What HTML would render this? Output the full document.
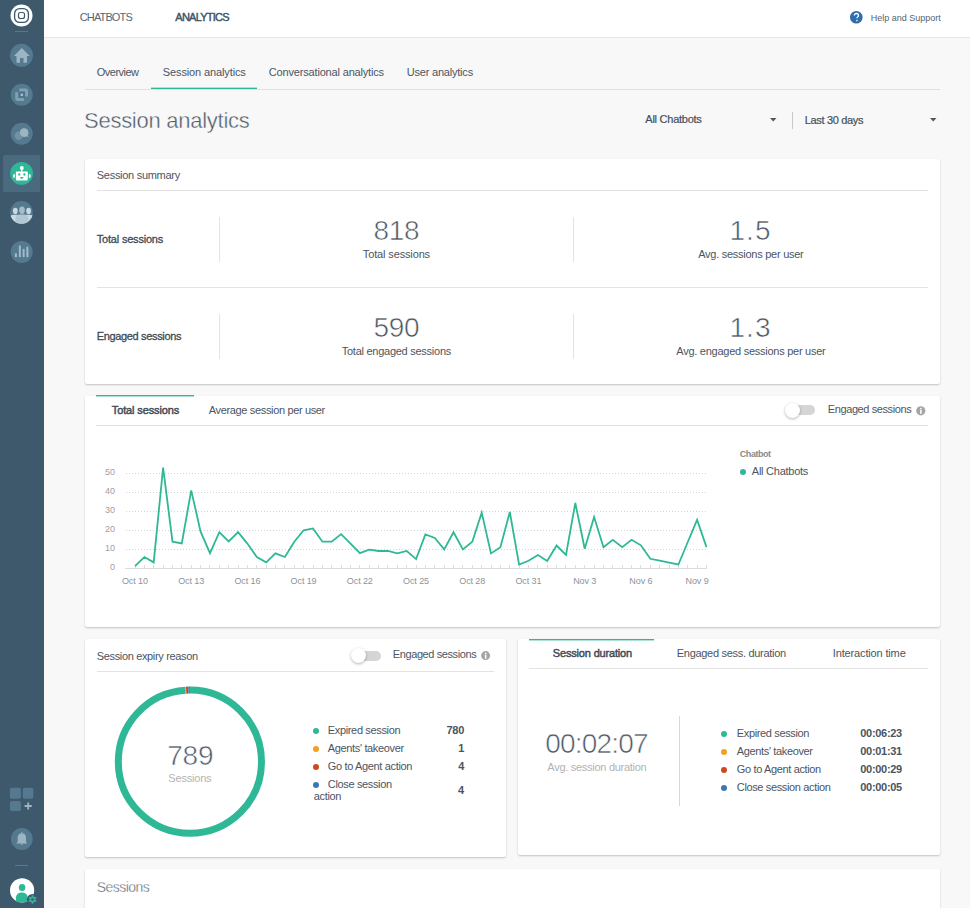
<!DOCTYPE html>
<html><head><meta charset="utf-8"><style>
html,body{margin:0;padding:0;}
body{width:970px;height:908px;overflow:hidden;position:relative;background:#f8f8f8;font-family:"Liberation Sans", sans-serif;}
.t{position:absolute;white-space:nowrap;}
</style></head><body>
<div style="position:absolute;left:44px;top:0px;width:926px;height:37px;background:#fff;"></div>
<div style="position:absolute;left:44px;top:37px;width:926px;height:1px;background:#e6e6e6;"></div>
<div class="t" style="top:12px;font-size:11px;line-height:11px;letter-spacing:-0.88px;color:#526676;left:79.8px;">CHATBOTS</div>
<div class="t" style="top:12px;font-size:11px;line-height:11px;letter-spacing:-0.75px;color:#3e5567;left:175.3px;-webkit-text-stroke:0.45px #3e5567;">ANALYTICS</div>
<svg style="position:absolute;left:849px;top:10px" width="15" height="15" viewBox="0 0 15 15"><circle cx="7.3" cy="7.3" r="6.3" fill="#2f6ead"/><path d="M5.3 5.6c0-1.3 1-2.1 2.1-2.1s2.1.8 2.1 1.9c0 1.4-1.6 1.5-1.6 2.9" stroke="#fff" stroke-width="1.3" fill="none"/><circle cx="7.9" cy="10.6" r="0.8" fill="#fff"/></svg>
<div class="t" style="top:14px;font-size:9px;line-height:9px;color:#556370;left:870.8px;">Help and Support</div>
<div style="position:absolute;left:85px;top:89px;width:855px;height:1px;background:#e0e0e0;"></div>
<div style="position:absolute;left:151px;top:87px;width:106px;height:2px;background:linear-gradient(rgba(46,184,150,0.35) 50%, #2eb896 50%);"></div>
<div class="t" style="top:67px;font-size:11px;line-height:11px;letter-spacing:-0.53px;color:#4b5561;left:96.8px;">Overview</div>
<div class="t" style="top:67px;font-size:11px;line-height:11px;letter-spacing:-0.12px;color:#4b5561;left:162.8px;">Session analytics</div>
<div class="t" style="top:67px;font-size:11px;line-height:11px;letter-spacing:-0.17px;color:#4b5561;left:268.8px;">Conversational analytics</div>
<div class="t" style="top:67px;font-size:11px;line-height:11px;letter-spacing:-0.21px;color:#4b5561;left:406.8px;">User analytics</div>
<div class="t" style="top:110px;font-size:22px;line-height:22px;letter-spacing:-0.26px;color:#4e5b68;left:84.0px;-webkit-text-stroke:0.4px #f8f8f8;">Session analytics</div>
<div class="t" style="top:114px;font-size:11px;line-height:11px;letter-spacing:-0.25px;color:#444f5a;left:645.3px;-webkit-text-stroke:0.2px #444f5a;">All Chatbots</div>
<div class="t" style="top:115px;font-size:11px;line-height:11px;letter-spacing:-0.34px;color:#444f5a;left:804.8px;-webkit-text-stroke:0.2px #444f5a;">Last 30 days</div>
<svg style="position:absolute;left:770px;top:118px" width="7" height="4"><path d="M0 0h6.5L3.25 3.5z" fill="#555"/></svg>
<svg style="position:absolute;left:930px;top:118px" width="7" height="4"><path d="M0 0h6.5L3.25 3.5z" fill="#555"/></svg>
<div style="position:absolute;left:792px;top:112px;width:1px;height:17px;background:#c8c8c8;"></div>
<div style="position:absolute;left:85px;top:159px;width:855px;height:225px;background:#fff;border-radius:2px;box-shadow:0 1px 2px rgba(0,0,0,0.22);"></div>
<div style="position:absolute;left:85px;top:396px;width:855px;height:231px;background:#fff;border-radius:2px;box-shadow:0 1px 2px rgba(0,0,0,0.22);"></div>
<div style="position:absolute;left:85px;top:639px;width:421px;height:218px;background:#fff;border-radius:2px;box-shadow:0 1px 2px rgba(0,0,0,0.22);"></div>
<div style="position:absolute;left:518px;top:639px;width:422px;height:216px;background:#fff;border-radius:2px;box-shadow:0 1px 2px rgba(0,0,0,0.22);"></div>
<div style="position:absolute;left:85px;top:869px;width:855px;height:60px;background:#fff;border-radius:2px;box-shadow:0 1px 2px rgba(0,0,0,0.22);"></div>
<div class="t" style="top:170px;font-size:11px;line-height:11px;letter-spacing:-0.29px;color:#4b5561;left:96.8px;">Session summary</div>
<div style="position:absolute;left:97px;top:190px;width:831px;height:1px;background:#e3e3e3;"></div>
<div style="position:absolute;left:97px;top:287px;width:831px;height:1px;background:#e3e3e3;"></div>
<div style="position:absolute;left:219px;top:217px;width:1px;height:45px;background:#e3e3e3;"></div>
<div style="position:absolute;left:573px;top:217px;width:1px;height:45px;background:#e3e3e3;"></div>
<div style="position:absolute;left:219px;top:314px;width:1px;height:45px;background:#e3e3e3;"></div>
<div style="position:absolute;left:573px;top:314px;width:1px;height:45px;background:#e3e3e3;"></div>
<div class="t" style="top:234px;font-size:11px;line-height:11px;letter-spacing:-0.2px;color:#3f4a55;left:96.8px;-webkit-text-stroke:0.3px #3f4a55;">Total sessions</div>
<div class="t" style="top:331px;font-size:11px;line-height:11px;letter-spacing:-0.35px;color:#3f4a55;left:96.8px;-webkit-text-stroke:0.3px #3f4a55;">Engaged sessions</div>
<div class="t" style="top:217px;font-size:28px;line-height:28px;letter-spacing:-0.4px;color:#4b5561;left:246.3px;width:300px;text-align:center;-webkit-text-stroke:0.6px #fff;">818</div>
<div class="t" style="top:249px;font-size:11px;line-height:11px;letter-spacing:-0.14px;color:#4b5561;left:246.43px;width:300px;text-align:center;">Total sessions</div>
<div class="t" style="top:217px;font-size:28px;line-height:28px;letter-spacing:1.0px;color:#4b5561;left:600.5px;width:300px;text-align:center;-webkit-text-stroke:0.6px #fff;">1.5</div>
<div class="t" style="top:249px;font-size:11px;line-height:11px;letter-spacing:-0.26px;color:#4b5561;left:600.87px;width:300px;text-align:center;">Avg. sessions per user</div>
<div class="t" style="top:314px;font-size:28px;line-height:28px;letter-spacing:-0.4px;color:#4b5561;left:246.3px;width:300px;text-align:center;-webkit-text-stroke:0.6px #fff;">590</div>
<div class="t" style="top:346px;font-size:11px;line-height:11px;letter-spacing:-0.26px;color:#4b5561;left:246.37px;width:300px;text-align:center;">Total engaged sessions</div>
<div class="t" style="top:314px;font-size:28px;line-height:28px;letter-spacing:1.0px;color:#4b5561;left:600.5px;width:300px;text-align:center;-webkit-text-stroke:0.6px #fff;">1.3</div>
<div class="t" style="top:346px;font-size:11px;line-height:11px;letter-spacing:-0.26px;color:#4b5561;left:600.87px;width:300px;text-align:center;">Avg. engaged sessions per user</div>
<div style="position:absolute;left:96px;top:395px;width:98px;height:2px;background:linear-gradient(#2eb896 50%, rgba(46,184,150,0.4) 50%);"></div>
<div style="position:absolute;left:96px;top:425px;width:832px;height:1px;background:#e3e3e3;"></div>
<div class="t" style="top:405px;font-size:11px;line-height:11px;letter-spacing:-0.13px;color:#3f4a55;left:111.8px;-webkit-text-stroke:0.45px #3f4a55;">Total sessions</div>
<div class="t" style="top:405px;font-size:11px;line-height:11px;letter-spacing:-0.35px;color:#4b5561;left:208.8px;">Average session per user</div>
<div style="position:absolute;left:787px;top:405px;width:28px;height:10px;background:#d5d5d5;border-radius:5px;"></div>
<div style="position:absolute;left:785px;top:403px;width:15px;height:15px;background:#fff;border-radius:50%;box-shadow:0 1px 3px rgba(0,0,0,0.3);"></div>
<div class="t" style="top:404px;font-size:11px;line-height:11px;letter-spacing:-0.4px;color:#4b5561;left:827.8px;">Engaged sessions</div>
<svg style="position:absolute;left:916px;top:406px" width="10" height="10"><circle cx="4.8" cy="4.8" r="4.6" fill="#a5a5a5"/><rect x="4.1" y="4" width="1.5" height="3.8" fill="#fff"/><circle cx="4.85" cy="2.6" r="0.85" fill="#fff"/></svg>
<svg style="position:absolute;left:0;top:0" width="970" height="908"><line x1="126" y1="549.5" x2="707" y2="549.5" stroke="#d4d4d4" stroke-width="1" stroke-dasharray="1 2"/><line x1="126" y1="530.5" x2="707" y2="530.5" stroke="#d4d4d4" stroke-width="1" stroke-dasharray="1 2"/><line x1="126" y1="511.5" x2="707" y2="511.5" stroke="#d4d4d4" stroke-width="1" stroke-dasharray="1 2"/><line x1="126" y1="492.5" x2="707" y2="492.5" stroke="#d4d4d4" stroke-width="1" stroke-dasharray="1 2"/><line x1="126" y1="473.5" x2="707" y2="473.5" stroke="#d4d4d4" stroke-width="1" stroke-dasharray="1 2"/><line x1="125" y1="568.5" x2="707" y2="568.5" stroke="#dcdcdc" stroke-width="1"/><line x1="135.5" y1="565" x2="135.5" y2="568" stroke="#dcdcdc" stroke-width="1"/><line x1="144.5" y1="565" x2="144.5" y2="568" stroke="#dcdcdc" stroke-width="1"/><line x1="153.5" y1="565" x2="153.5" y2="568" stroke="#dcdcdc" stroke-width="1"/><line x1="163.5" y1="565" x2="163.5" y2="568" stroke="#dcdcdc" stroke-width="1"/><line x1="172.5" y1="565" x2="172.5" y2="568" stroke="#dcdcdc" stroke-width="1"/><line x1="181.5" y1="565" x2="181.5" y2="568" stroke="#dcdcdc" stroke-width="1"/><line x1="191.5" y1="565" x2="191.5" y2="568" stroke="#dcdcdc" stroke-width="1"/><line x1="200.5" y1="565" x2="200.5" y2="568" stroke="#dcdcdc" stroke-width="1"/><line x1="209.5" y1="565" x2="209.5" y2="568" stroke="#dcdcdc" stroke-width="1"/><line x1="219.5" y1="565" x2="219.5" y2="568" stroke="#dcdcdc" stroke-width="1"/><line x1="228.5" y1="565" x2="228.5" y2="568" stroke="#dcdcdc" stroke-width="1"/><line x1="238.5" y1="565" x2="238.5" y2="568" stroke="#dcdcdc" stroke-width="1"/><line x1="247.5" y1="565" x2="247.5" y2="568" stroke="#dcdcdc" stroke-width="1"/><line x1="256.5" y1="565" x2="256.5" y2="568" stroke="#dcdcdc" stroke-width="1"/><line x1="266.5" y1="565" x2="266.5" y2="568" stroke="#dcdcdc" stroke-width="1"/><line x1="275.5" y1="565" x2="275.5" y2="568" stroke="#dcdcdc" stroke-width="1"/><line x1="284.5" y1="565" x2="284.5" y2="568" stroke="#dcdcdc" stroke-width="1"/><line x1="294.5" y1="565" x2="294.5" y2="568" stroke="#dcdcdc" stroke-width="1"/><line x1="303.5" y1="565" x2="303.5" y2="568" stroke="#dcdcdc" stroke-width="1"/><line x1="313.5" y1="565" x2="313.5" y2="568" stroke="#dcdcdc" stroke-width="1"/><line x1="322.5" y1="565" x2="322.5" y2="568" stroke="#dcdcdc" stroke-width="1"/><line x1="331.5" y1="565" x2="331.5" y2="568" stroke="#dcdcdc" stroke-width="1"/><line x1="341.5" y1="565" x2="341.5" y2="568" stroke="#dcdcdc" stroke-width="1"/><line x1="350.5" y1="565" x2="350.5" y2="568" stroke="#dcdcdc" stroke-width="1"/><line x1="359.5" y1="565" x2="359.5" y2="568" stroke="#dcdcdc" stroke-width="1"/><line x1="369.5" y1="565" x2="369.5" y2="568" stroke="#dcdcdc" stroke-width="1"/><line x1="378.5" y1="565" x2="378.5" y2="568" stroke="#dcdcdc" stroke-width="1"/><line x1="387.5" y1="565" x2="387.5" y2="568" stroke="#dcdcdc" stroke-width="1"/><line x1="397.5" y1="565" x2="397.5" y2="568" stroke="#dcdcdc" stroke-width="1"/><line x1="406.5" y1="565" x2="406.5" y2="568" stroke="#dcdcdc" stroke-width="1"/><line x1="416.5" y1="565" x2="416.5" y2="568" stroke="#dcdcdc" stroke-width="1"/><line x1="425.5" y1="565" x2="425.5" y2="568" stroke="#dcdcdc" stroke-width="1"/><line x1="434.5" y1="565" x2="434.5" y2="568" stroke="#dcdcdc" stroke-width="1"/><line x1="444.5" y1="565" x2="444.5" y2="568" stroke="#dcdcdc" stroke-width="1"/><line x1="453.5" y1="565" x2="453.5" y2="568" stroke="#dcdcdc" stroke-width="1"/><line x1="462.5" y1="565" x2="462.5" y2="568" stroke="#dcdcdc" stroke-width="1"/><line x1="472.5" y1="565" x2="472.5" y2="568" stroke="#dcdcdc" stroke-width="1"/><line x1="481.5" y1="565" x2="481.5" y2="568" stroke="#dcdcdc" stroke-width="1"/><line x1="491.5" y1="565" x2="491.5" y2="568" stroke="#dcdcdc" stroke-width="1"/><line x1="500.5" y1="565" x2="500.5" y2="568" stroke="#dcdcdc" stroke-width="1"/><line x1="509.5" y1="565" x2="509.5" y2="568" stroke="#dcdcdc" stroke-width="1"/><line x1="519.5" y1="565" x2="519.5" y2="568" stroke="#dcdcdc" stroke-width="1"/><line x1="528.5" y1="565" x2="528.5" y2="568" stroke="#dcdcdc" stroke-width="1"/><line x1="537.5" y1="565" x2="537.5" y2="568" stroke="#dcdcdc" stroke-width="1"/><line x1="547.5" y1="565" x2="547.5" y2="568" stroke="#dcdcdc" stroke-width="1"/><line x1="556.5" y1="565" x2="556.5" y2="568" stroke="#dcdcdc" stroke-width="1"/><line x1="565.5" y1="565" x2="565.5" y2="568" stroke="#dcdcdc" stroke-width="1"/><line x1="575.5" y1="565" x2="575.5" y2="568" stroke="#dcdcdc" stroke-width="1"/><line x1="584.5" y1="565" x2="584.5" y2="568" stroke="#dcdcdc" stroke-width="1"/><line x1="594.5" y1="565" x2="594.5" y2="568" stroke="#dcdcdc" stroke-width="1"/><line x1="603.5" y1="565" x2="603.5" y2="568" stroke="#dcdcdc" stroke-width="1"/><line x1="612.5" y1="565" x2="612.5" y2="568" stroke="#dcdcdc" stroke-width="1"/><line x1="622.5" y1="565" x2="622.5" y2="568" stroke="#dcdcdc" stroke-width="1"/><line x1="631.5" y1="565" x2="631.5" y2="568" stroke="#dcdcdc" stroke-width="1"/><line x1="640.5" y1="565" x2="640.5" y2="568" stroke="#dcdcdc" stroke-width="1"/><line x1="650.5" y1="565" x2="650.5" y2="568" stroke="#dcdcdc" stroke-width="1"/><line x1="659.5" y1="565" x2="659.5" y2="568" stroke="#dcdcdc" stroke-width="1"/><line x1="669.5" y1="565" x2="669.5" y2="568" stroke="#dcdcdc" stroke-width="1"/><line x1="678.5" y1="565" x2="678.5" y2="568" stroke="#dcdcdc" stroke-width="1"/><line x1="687.5" y1="565" x2="687.5" y2="568" stroke="#dcdcdc" stroke-width="1"/><line x1="697.5" y1="565" x2="697.5" y2="568" stroke="#dcdcdc" stroke-width="1"/><line x1="706.5" y1="565" x2="706.5" y2="568" stroke="#dcdcdc" stroke-width="1"/><polyline points="135.0,566.2 144.4,557.0 153.7,562.4 163.1,467.6 172.5,541.7 181.8,543.4 191.2,490.4 200.6,531.6 210.0,553.2 219.3,532.2 228.7,541.5 238.1,532.2 247.4,543.6 256.8,557.0 266.2,562.4 275.5,553.4 284.9,557.0 294.3,541.7 303.6,530.3 313.0,528.4 322.4,541.7 331.7,541.7 341.1,534.1 350.5,543.6 359.9,553.2 369.2,549.6 378.6,551.0 388.0,551.0 397.3,553.4 406.7,551.0 416.1,559.1 425.4,534.4 434.8,538.0 444.2,549.4 453.5,532.2 462.9,549.4 472.3,541.7 481.7,512.6 491.0,553.4 500.4,547.2 509.8,512.0 519.1,564.6 528.5,560.8 537.9,555.1 547.2,561.0 556.6,545.5 566.0,555.0 575.3,503.0 584.7,548.7 594.1,517.0 603.5,547.2 612.8,539.8 622.2,547.2 631.6,539.8 640.9,545.3 650.3,558.8 659.7,560.7 669.0,562.6 678.4,564.5 687.8,542.0 697.1,519.8 706.5,547.1" fill="none" stroke="#2eb896" stroke-width="1.8" stroke-linejoin="miter"/></svg>
<div class="t" style="top:563px;font-size:9px;line-height:9px;color:#a0a0a0;left:85px;width:30px;text-align:right;">0</div>
<div class="t" style="top:544px;font-size:9px;line-height:9px;color:#a0a0a0;left:85px;width:30px;text-align:right;">10</div>
<div class="t" style="top:525px;font-size:9px;line-height:9px;color:#a0a0a0;left:85px;width:30px;text-align:right;">20</div>
<div class="t" style="top:506px;font-size:9px;line-height:9px;color:#a0a0a0;left:85px;width:30px;text-align:right;">30</div>
<div class="t" style="top:487px;font-size:9px;line-height:9px;color:#a0a0a0;left:85px;width:30px;text-align:right;">40</div>
<div class="t" style="top:468px;font-size:9px;line-height:9px;color:#a0a0a0;left:85px;width:30px;text-align:right;">50</div>
<div class="t" style="top:577px;font-size:9px;line-height:9px;letter-spacing:-0.1px;color:#8b949c;left:104.95px;width:60px;text-align:center;">Oct 10</div>
<div class="t" style="top:577px;font-size:9px;line-height:9px;letter-spacing:-0.1px;color:#8b949c;left:161.164px;width:60px;text-align:center;">Oct 13</div>
<div class="t" style="top:577px;font-size:9px;line-height:9px;letter-spacing:-0.1px;color:#8b949c;left:217.378px;width:60px;text-align:center;">Oct 16</div>
<div class="t" style="top:577px;font-size:9px;line-height:9px;letter-spacing:-0.1px;color:#8b949c;left:273.592px;width:60px;text-align:center;">Oct 19</div>
<div class="t" style="top:577px;font-size:9px;line-height:9px;letter-spacing:-0.1px;color:#8b949c;left:329.806px;width:60px;text-align:center;">Oct 22</div>
<div class="t" style="top:577px;font-size:9px;line-height:9px;letter-spacing:-0.1px;color:#8b949c;left:386.02px;width:60px;text-align:center;">Oct 25</div>
<div class="t" style="top:577px;font-size:9px;line-height:9px;letter-spacing:-0.1px;color:#8b949c;left:442.234px;width:60px;text-align:center;">Oct 28</div>
<div class="t" style="top:577px;font-size:9px;line-height:9px;letter-spacing:-0.1px;color:#8b949c;left:498.44800000000004px;width:60px;text-align:center;">Oct 31</div>
<div class="t" style="top:577px;font-size:9px;line-height:9px;letter-spacing:-0.1px;color:#8b949c;left:554.662px;width:60px;text-align:center;">Nov 3</div>
<div class="t" style="top:577px;font-size:9px;line-height:9px;letter-spacing:-0.1px;color:#8b949c;left:610.876px;width:60px;text-align:center;">Nov 6</div>
<div class="t" style="top:577px;font-size:9px;line-height:9px;letter-spacing:-0.1px;color:#8b949c;left:667.09px;width:60px;text-align:center;">Nov 9</div>
<div class="t" style="top:450px;font-size:9px;line-height:9px;font-weight:700;letter-spacing:-0.45px;color:#8a8a8a;left:739.8px;">Chatbot</div>
<div style="position:absolute;left:740px;top:469px;width:6px;height:6px;background:#2eb896;border-radius:50%;"></div>
<div class="t" style="top:466px;font-size:11px;line-height:11px;letter-spacing:-0.25px;color:#4b5561;left:751.8px;">All Chatbots</div>
<div class="t" style="top:651px;font-size:11px;line-height:11px;letter-spacing:-0.35px;color:#4b5561;left:96.8px;">Session expiry reason</div>
<div style="position:absolute;left:97px;top:671px;width:397px;height:1px;background:#e3e3e3;"></div>
<div style="position:absolute;left:355px;top:651px;width:26px;height:10px;background:#d5d5d5;border-radius:5px;"></div>
<div style="position:absolute;left:351px;top:648px;width:15px;height:15px;background:#fff;border-radius:50%;box-shadow:0 1px 3px rgba(0,0,0,0.3);"></div>
<div class="t" style="top:649px;font-size:11px;line-height:11px;letter-spacing:-0.4px;color:#4b5561;left:392.8px;">Engaged sessions</div>
<svg style="position:absolute;left:481px;top:651px" width="10" height="10"><circle cx="4.6" cy="4.6" r="4.5" fill="#a5a5a5"/><rect x="3.9" y="3.8" width="1.5" height="3.8" fill="#fff"/><circle cx="4.65" cy="2.4" r="0.85" fill="#fff"/></svg>
<svg style="position:absolute;left:0;top:0" width="970" height="908"><circle cx="189.9" cy="761.7" r="71.6" fill="none" stroke="#2eb896" stroke-width="7" stroke-dasharray="444.744 449.876" stroke-dashoffset="0.000" transform="rotate(-90 189.9 761.7)"/><circle cx="189.9" cy="761.7" r="71.6" fill="none" stroke="#f0a023" stroke-width="7" stroke-dasharray="0.570 449.876" stroke-dashoffset="-444.744" transform="rotate(-90 189.9 761.7)"/><circle cx="189.9" cy="761.7" r="71.6" fill="none" stroke="#cc4a1c" stroke-width="7" stroke-dasharray="2.281 449.876" stroke-dashoffset="-445.315" transform="rotate(-90 189.9 761.7)"/><circle cx="189.9" cy="761.7" r="71.6" fill="none" stroke="#3a78b4" stroke-width="7" stroke-dasharray="2.281 449.876" stroke-dashoffset="-447.595" transform="rotate(-90 189.9 761.7)"/></svg>
<div class="t" style="top:742px;font-size:28px;line-height:28px;letter-spacing:-0.15px;color:#4e5b68;left:40.325px;width:300px;text-align:center;-webkit-text-stroke:0.6px #fff;">789</div>
<div class="t" style="top:773px;font-size:11px;line-height:11px;letter-spacing:-0.2px;color:#b3b3b3;left:39.9px;width:300px;text-align:center;">Sessions</div>
<div style="position:absolute;left:313px;top:728px;width:6px;height:6px;background:#2eb896;border-radius:50%;"></div>
<div class="t" style="top:725px;font-size:11px;line-height:11px;letter-spacing:-0.35px;color:#4b5561;left:327.8px;">Expired session</div>
<div class="t" style="top:725px;font-size:11px;line-height:11px;font-weight:700;letter-spacing:-0.2px;color:#4b5561;left:424.2px;width:40px;text-align:right;">780</div>
<div style="position:absolute;left:313px;top:746px;width:6px;height:6px;background:#f0a023;border-radius:50%;"></div>
<div class="t" style="top:743px;font-size:11px;line-height:11px;letter-spacing:-0.35px;color:#4b5561;left:327.8px;">Agents' takeover</div>
<div class="t" style="top:743px;font-size:11px;line-height:11px;font-weight:700;letter-spacing:-0.2px;color:#4b5561;left:424.2px;width:40px;text-align:right;">1</div>
<div style="position:absolute;left:313px;top:764px;width:6px;height:6px;background:#cc4a1c;border-radius:50%;"></div>
<div class="t" style="top:761px;font-size:11px;line-height:11px;letter-spacing:-0.35px;color:#4b5561;left:327.8px;">Go to Agent action</div>
<div class="t" style="top:761px;font-size:11px;line-height:11px;font-weight:700;letter-spacing:-0.2px;color:#4b5561;left:424.2px;width:40px;text-align:right;">4</div>
<div style="position:absolute;left:313px;top:781.5px;width:6px;height:6px;background:#3a78b4;border-radius:50%;"></div>
<div class="t" style="top:779px;font-size:11px;line-height:11px;letter-spacing:-0.35px;color:#4b5561;left:327.8px;">Close session</div>
<div class="t" style="top:791px;font-size:11px;line-height:11px;letter-spacing:-0.35px;color:#4b5561;left:313.8px;">action</div>
<div class="t" style="top:785px;font-size:11px;line-height:11px;font-weight:700;color:#4b5561;left:424px;width:40px;text-align:right;">4</div>
<div style="position:absolute;left:529px;top:639px;width:125px;height:2px;background:linear-gradient(#2eb896 50%, rgba(46,184,150,0.4) 50%);"></div>
<div style="position:absolute;left:529px;top:668px;width:399px;height:1px;background:#e3e3e3;"></div>
<div class="t" style="top:648px;font-size:11px;line-height:11px;letter-spacing:-0.17px;color:#3f4a55;left:552.8px;-webkit-text-stroke:0.45px #3f4a55;">Session duration</div>
<div class="t" style="top:648px;font-size:11px;line-height:11px;letter-spacing:-0.3px;color:#4b5561;left:676.8px;">Engaged sess. duration</div>
<div class="t" style="top:648px;font-size:11px;line-height:11px;letter-spacing:-0.15px;color:#4b5561;left:832.8px;">Interaction time</div>
<div class="t" style="top:730px;font-size:28px;line-height:28px;letter-spacing:-0.8px;color:#4e5b68;left:446.6px;width:300px;text-align:center;-webkit-text-stroke:0.6px #fff;">00:02:07</div>
<div class="t" style="top:762px;font-size:11px;line-height:11px;letter-spacing:-0.28px;color:#b3b3b3;left:446.86px;width:300px;text-align:center;">Avg. session duration</div>
<div style="position:absolute;left:679px;top:716px;width:1px;height:90px;background:#d8d8d8;"></div>
<div style="position:absolute;left:721px;top:731px;width:6px;height:6px;background:#2eb896;border-radius:50%;"></div>
<div class="t" style="top:728px;font-size:11px;line-height:11px;letter-spacing:-0.36px;color:#4b5561;left:736.8px;">Expired session</div>
<div class="t" style="top:728px;font-size:11px;line-height:11px;font-weight:700;letter-spacing:-0.3px;color:#4b5561;left:860.3px;">00:06:23</div>
<div style="position:absolute;left:721px;top:749px;width:6px;height:6px;background:#f0a023;border-radius:50%;"></div>
<div class="t" style="top:746px;font-size:11px;line-height:11px;letter-spacing:-0.36px;color:#4b5561;left:736.8px;">Agents' takeover</div>
<div class="t" style="top:746px;font-size:11px;line-height:11px;font-weight:700;letter-spacing:-0.3px;color:#4b5561;left:860.3px;">00:01:31</div>
<div style="position:absolute;left:721px;top:767px;width:6px;height:6px;background:#cc4a1c;border-radius:50%;"></div>
<div class="t" style="top:764px;font-size:11px;line-height:11px;letter-spacing:-0.36px;color:#4b5561;left:736.8px;">Go to Agent action</div>
<div class="t" style="top:764px;font-size:11px;line-height:11px;font-weight:700;letter-spacing:-0.3px;color:#4b5561;left:860.3px;">00:00:29</div>
<div style="position:absolute;left:721px;top:785px;width:6px;height:6px;background:#3a78b4;border-radius:50%;"></div>
<div class="t" style="top:782px;font-size:11px;line-height:11px;letter-spacing:-0.36px;color:#4b5561;left:736.8px;">Close session action</div>
<div class="t" style="top:782px;font-size:11px;line-height:11px;font-weight:700;letter-spacing:-0.3px;color:#4b5561;left:860.3px;">00:00:05</div>
<div class="t" style="top:880px;font-size:14px;line-height:14px;letter-spacing:-0.54px;color:#4e5b68;left:96.8px;-webkit-text-stroke:0.35px #fff;">Sessions</div>
<svg style="position:absolute;left:0;top:0" width="44" height="908" viewBox="0 0 44 908"><rect width="44" height="908" fill="#3d596b"/><circle cx="21.5" cy="15.5" r="11" fill="#fff"/><rect x="14.6" y="8.6" width="13.8" height="13.8" rx="5" fill="none" stroke="#3d596b" stroke-width="1.3"/><rect x="18.5" y="12.5" width="6" height="6" rx="2" fill="none" stroke="#3d596b" stroke-width="1.2"/><rect x="15" y="31" width="13" height="1" fill="#55788e"/><circle cx="21.5" cy="55.3" r="11.5" fill="#557a90"/><path d="M21.8 48.1L13.9 56h2.6v6.7h3.5v-4.6h3.5v4.6h3.5v-6.7h2.7z" fill="#9bb5c5"/><circle cx="21.7" cy="94.8" r="11" fill="#557a90"/><path d="M19.3 88.4H25.5a2.5 2.5 0 0 1 2.5 2.5V96.6H25.1V91.3H19.3Z" fill="#80a0b4"/><path d="M15.2 92.2H18.1V98.1H23.9V101H17.7a2.5 2.5 0 0 1-2.5-2.5Z" fill="#80a0b4"/><rect x="19" y="92" width="5.8" height="5.6" fill="#4f7189"/><rect x="20.7" y="93.7" width="2.2" height="2.2" fill="#b5c8d4"/><circle cx="21.7" cy="133.8" r="11" fill="#557a90"/><circle cx="18.7" cy="135.8" r="4.2" fill="#7191a5"/><circle cx="24.1" cy="132.6" r="4.7" fill="#557a90"/><circle cx="24.1" cy="132.6" r="4.4" fill="#9bb5c5"/><path d="M26 136l2.6 1.3-1.2-2.6z" fill="#9bb5c5"/><rect x="3" y="155" width="37" height="37" rx="1.5" fill="#4a6a7f"/><circle cx="21.6" cy="173.4" r="11.4" fill="#2eb896"/><circle cx="21.8" cy="168" r="2" fill="#fff"/><rect x="21.1" y="169" width="1.4" height="3" fill="#fff"/><rect x="15.9" y="171.4" width="11.9" height="9" rx="0.8" fill="#fff"/><ellipse cx="14.1" cy="176" rx="1" ry="1.9" fill="#fff"/><ellipse cx="29.7" cy="176" rx="1" ry="1.9" fill="#fff"/><circle cx="19.3" cy="174.5" r="1.15" fill="#2eb896"/><circle cx="24.4" cy="174.5" r="1.15" fill="#2eb896"/><path d="M20 177.1h3.5a1.75 1.6 0 0 1-3.5 0z" fill="#2eb896"/><circle cx="21.5" cy="212.4" r="11.3" fill="#557a90"/><clipPath id="cu"><circle cx="21.5" cy="212.4" r="11.3"/></clipPath><g clip-path="url(#cu)"><ellipse cx="15.3" cy="210.9" rx="2.4" ry="3.1" fill="#c9d8e1"/><ellipse cx="28.6" cy="210.9" rx="2.4" ry="3.1" fill="#c9d8e1"/><path d="M9 225v-6.5a5.5 4 0 0 1 5.5-3.7h1.5a5.5 4 0 0 1 5.5 3.7V225z" fill="#c9d8e1"/><path d="M22 225v-6.5a5.5 4 0 0 1 5.5-3.7h1.5a5.5 4 0 0 1 5.5 3.7V225z" fill="#c9d8e1"/><ellipse cx="22" cy="210.3" rx="2.8" ry="3.7" fill="#a5bccb"/><path d="M15.6 226v-7.5a4 4 0 0 1 4-4h4.8a4 4 0 0 1 4 4V226z" fill="#b3c7d3"/></g><circle cx="21.7" cy="251.9" r="11" fill="#557a90"/><g fill="#a3bccb"><rect x="14.9" y="253.4" width="2" height="3.7"/><rect x="18.9" y="245.5" width="1.9" height="11.6"/><rect x="22.7" y="248.9" width="1.9" height="8.2"/><rect x="26.4" y="246.7" width="2" height="10.4"/></g><g fill="#557a90"><rect x="9.9" y="787.8" width="11" height="11" rx="2"/><rect x="22.8" y="787.8" width="10.5" height="11" rx="2"/><rect x="9.9" y="801" width="11" height="10" rx="2"/></g><path d="M28.2 802.5v7M24.6 806h7.2" stroke="#9bb5c5" stroke-width="1.8"/><circle cx="21.8" cy="839" r="10.9" fill="#557a90"/><path d="M16.4 843.4h10.9l-1.3-1.6v-4.6a4.2 4.6 0 0 0-8.3 0v4.6z" fill="#9bb5c5"/><rect x="20.9" y="843.8" width="1.8" height="0.9" fill="#9bb5c5"/><rect x="21.2" y="832.2" width="1.2" height="1.2" fill="#9bb5c5"/><rect x="15" y="865" width="13" height="1" fill="#55788e"/><circle cx="22.1" cy="890.4" r="12.1" fill="#fff"/><clipPath id="ca"><circle cx="22.1" cy="890.4" r="12.1"/></clipPath><g clip-path="url(#ca)" fill="#2eb896"><ellipse cx="22.1" cy="887.5" rx="3.3" ry="3.5"/><path d="M15.9 903v-5.5a6 5.6 0 0 1 11.9 0v5.5z"/></g><circle cx="32.5" cy="899.5" r="5.6" fill="#3d596b"/><g fill="#2eb896"><rect x="31.7" y="895.2" width="1.6" height="8.6" transform="rotate(0 32.5 899.5)" /><rect x="31.7" y="895.2" width="1.6" height="8.6" transform="rotate(60 32.5 899.5)" /><rect x="31.7" y="895.2" width="1.6" height="8.6" transform="rotate(120 32.5 899.5)" /><circle cx="32.5" cy="899.5" r="3"/></g><circle cx="32.5" cy="899.5" r="1.3" fill="#3d596b"/></svg>
</body></html>
